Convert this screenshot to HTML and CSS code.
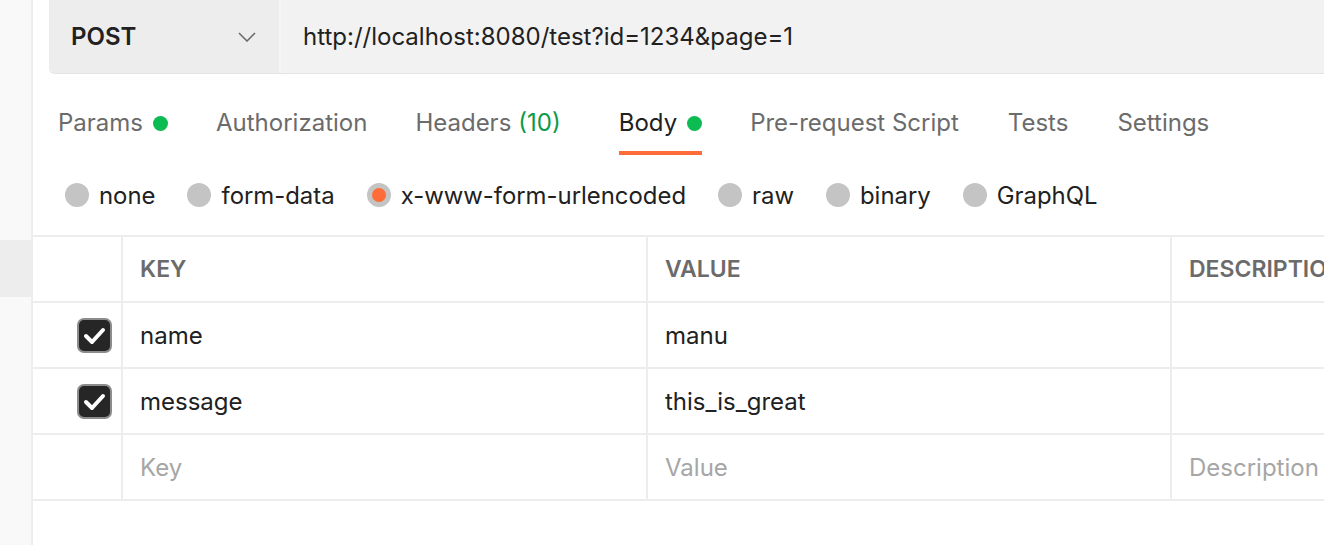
FILE: index.html
```html
<!DOCTYPE html>
<html lang="en">
<head>
<meta charset="utf-8">
<title>Request</title>
<link rel="stylesheet" href="styles.css">
</head>
<body>
<div class="app">
  <aside class="sidebar"><div class="sidebar-active"></div></aside>
  <main class="main">
    <div class="urlbar">
      <div class="method">
        <span class="method-name">POST</span>
        <svg class="chevron" width="18" height="10" viewBox="0 0 18 10"><path d="M1 1 L9 9 L17 1" fill="none" stroke="#6b6b6b" stroke-width="1.6"/></svg>
      </div>
      <div class="url">http://localhost:8080/test?id=1234&amp;page=1</div>
    </div>

    <nav class="tabs">
      <div class="tab">Params <span class="dot"></span></div>
      <div class="tab">Authorization</div>
      <div class="tab">Headers <span class="count">(10)</span></div>
      <div class="tab active">Body <span class="dot"></span></div>
      <div class="tab">Pre-request Script</div>
      <div class="tab">Tests</div>
      <div class="tab">Settings</div>
    </nav>

    <div class="radios">
      <label class="radio"><span class="circle"></span>none</label>
      <label class="radio"><span class="circle"></span>form-data</label>
      <label class="radio"><span class="circle checked"></span>x-www-form-urlencoded</label>
      <label class="radio"><span class="circle"></span>raw</label>
      <label class="radio"><span class="circle"></span>binary</label>
      <label class="radio"><span class="circle"></span>GraphQL</label>
    </div>

    <div class="table">
      <div class="row head">
        <div class="cell check"></div>
        <div class="cell">KEY</div>
        <div class="cell">VALUE</div>
        <div class="cell last">DESCRIPTION</div>
      </div>
      <div class="row">
        <div class="cell check"><span class="box"><svg width="35" height="35" viewBox="0 0 35 35"><path d="M9 18 L15 24 L26 12" fill="none" stroke="#fff" stroke-width="4" stroke-linecap="round" stroke-linejoin="round"/></svg></span></div>
        <div class="cell">name</div>
        <div class="cell">manu</div>
        <div class="cell last"></div>
      </div>
      <div class="row">
        <div class="cell check"><span class="box"><svg width="35" height="35" viewBox="0 0 35 35"><path d="M9 18 L15 24 L26 12" fill="none" stroke="#fff" stroke-width="4" stroke-linecap="round" stroke-linejoin="round"/></svg></span></div>
        <div class="cell">message</div>
        <div class="cell">this_is_great</div>
        <div class="cell last"></div>
      </div>
      <div class="row">
        <div class="cell check"></div>
        <div class="cell placeholder">Key</div>
        <div class="cell placeholder">Value</div>
        <div class="cell last placeholder">Description</div>
      </div>
    </div>
  </main>
</div>
</body>
</html>
```

FILE: styles.css
```css
* { box-sizing: border-box; }
html, body { margin: 0; padding: 0; }
body {
  background: #ffffff;
  font-family: Inter, "Noto Sans", "Liberation Sans", sans-serif;
  font-size: 24px;
  color: #212121;
  width: 1324px;
  height: 545px;
  overflow: hidden;
}
.app { display: flex; height: 545px; }
.sidebar {
  width: 33px;
  flex: none;
  background: #f9f9f9;
  border-right: 2px solid #ededed;
}
.sidebar-active {
  margin-top: 240px;
  height: 57px;
  background: #ededed;
}
.main { flex: 1; min-width: 0; overflow: hidden; }

.urlbar {
  margin-left: 16px;
  height: 74px;
  display: flex;
  background: #f2f2f2;
  border-bottom: 1px solid #e4e4e4;
  border-bottom-left-radius: 6px;
  overflow: hidden;
  white-space: nowrap;
}
.method {
  width: 232px;
  flex: none;
  display: flex;
  align-items: center;
  justify-content: space-between;
  padding: 0 23px 0 22px;
  background: #ededed;
  border-right: 2px solid #f5f5f5;
}
.method-name { font-weight: 600; color: #212121; }
.chevron { display: block; }
.url { display: flex; align-items: center; padding-left: 22px; color: #212121; }

.tabs {
  display: flex;
  gap: 48px;
  padding-left: 25px;
  white-space: nowrap;
}
.tab {
  display: flex;
  align-items: center;
  gap: 10px;
  height: 81px;
  padding-top: 34px;
  padding-bottom: 13px;
  line-height: 30px;
  color: #6b6b6b;
  border-bottom: 4px solid transparent;
}
.tab.active { color: #212121; border-bottom-color: #ff6c37; margin-left: 10px; }
.tab:nth-last-child(-n+2) { margin-left: 1px; }
.dot { width: 15px; height: 15px; border-radius: 50%; background: #0cbb52; display: inline-block; }
.count { color: #0c9a45; margin-left: -3px; }

.radios {
  display: flex;
  gap: 32px;
  padding: 28px 0 28px 32px;
  white-space: nowrap;
  font-size: 23.9px;
}
.radio {
  display: flex;
  align-items: center;
  gap: 10px;
  height: 24px;
  color: #212121;
}
.circle {
  width: 24px; height: 24px;
  border-radius: 50%;
  background: #c4c4c4;
  display: inline-block;
  flex: none;
}
.circle.checked { background: #ff6c37; border: 5px solid #c4c4c4; }

.table { border-top: 2px solid #ededed; }
.row {
  display: grid;
  grid-template-columns: 90px 525px 524px 1fr;
  height: 66px;
  border-bottom: 2px solid #ededed;
}
.cell {
  display: flex;
  align-items: center;
  padding-left: 17px;
  border-right: 2px solid #ededed;
  white-space: nowrap;
  overflow: hidden;
}
.cell.last { border-right: none; }
.cell.check { justify-content: flex-end; padding-right: 9px; padding-left: 0; }
.head .cell { font-weight: 600; color: #6b6b6b; font-size: 23px; }
.placeholder { color: #a6a6a6; }
.box {
  width: 35px; height: 35px;
  border-radius: 7px;
  background: #262626;
  border: 2px solid #8c8c8c;
  display: flex;
  align-items: center;
  justify-content: center;
  overflow: hidden;
}
.box svg { display: block; flex: none; }
```
